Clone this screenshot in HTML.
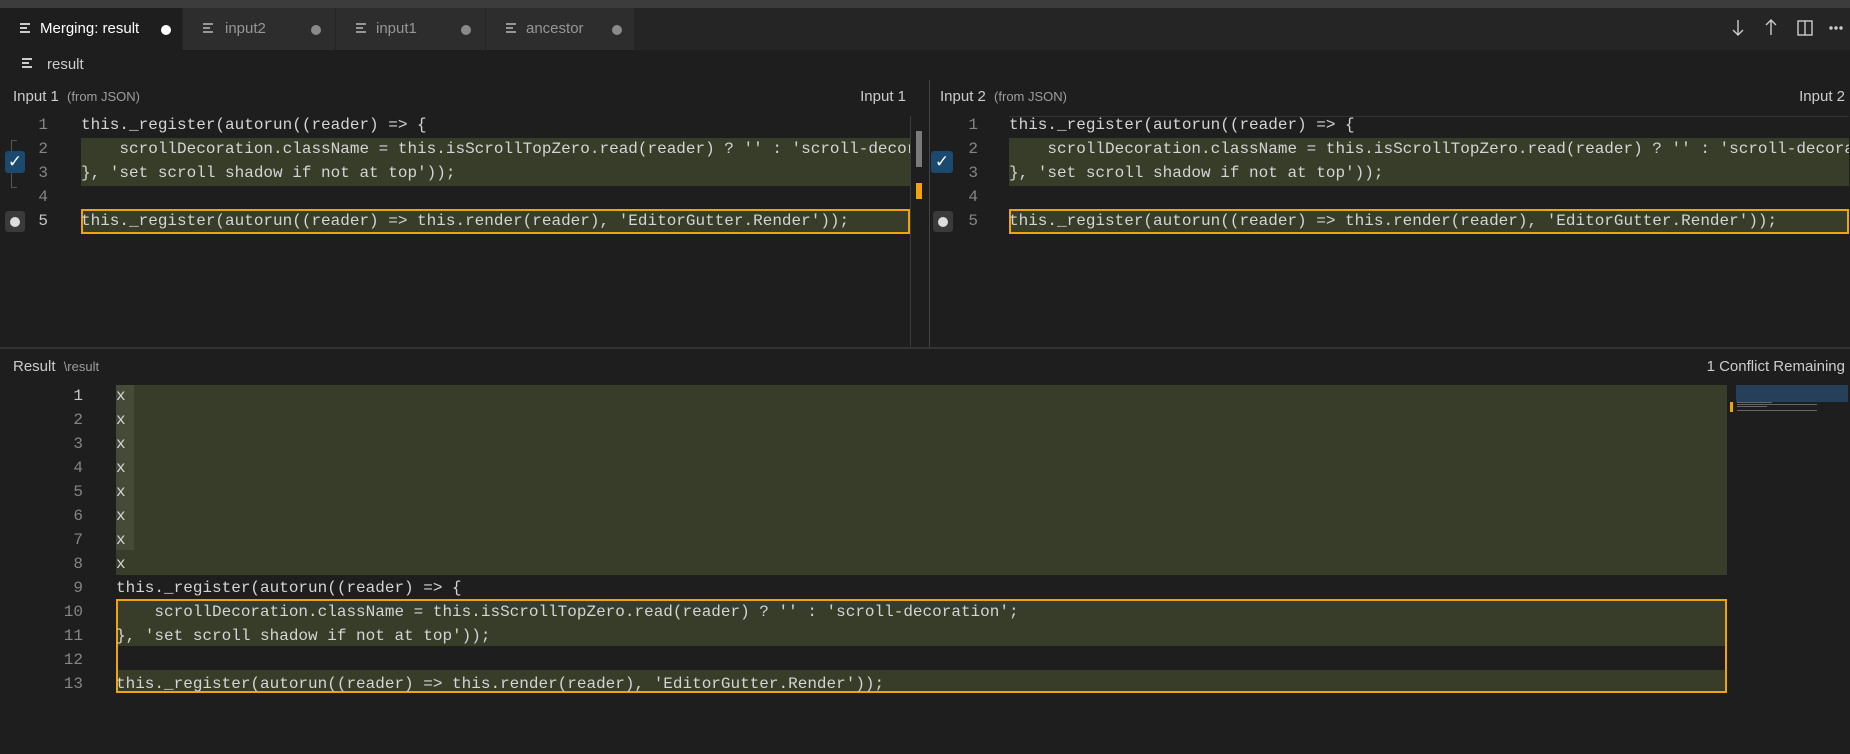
<!DOCTYPE html>
<html><head><meta charset="utf-8"><style>
*{margin:0;padding:0;box-sizing:border-box}
body{width:1850px;height:754px;background:#1e1e1e;overflow:hidden;position:relative;font-family:"Liberation Sans",sans-serif;color:#cccccc}
.a{position:absolute}
.code{font-family:"Liberation Mono",monospace;font-size:16px;color:#d4d4d4;white-space:pre;line-height:24px}
.ln{font-family:"Liberation Mono",monospace;font-size:16px;color:#858585;text-align:right;line-height:24px;width:30px}
.tab{position:absolute;top:8px;height:42px;background:#2d2d2d;font-size:15px;color:#969696;line-height:42px;border-right:1px solid #252526}
.tab .ic{position:absolute;left:20px;top:15px;width:10px}
.ic i{display:block;height:1.5px;background:currentColor;margin-bottom:2.5px}
.dot{position:absolute;top:17px;width:10px;height:10px;border-radius:50%;background:#8a8a8a}
.hl{background:#373d29}
.ob{border:2px solid #f0a30a}
</style></head><body>
<div class="a" style="left:0;top:0;width:1850px;height:8px;background:#3c3c3c"></div>
<div class="a" style="left:0;top:8px;width:1850px;height:42px;background:#252526"></div>
<div class="tab" style="left:0;width:183px;background:#1e1e1e;color:#fff"><span class="ic" style="color:#ccc"><i></i><i style="width:7px"></i><i></i></span><span style="position:absolute;left:40px">Merging: result</span><span class="dot" style="left:161px;background:#fff"></span></div>
<div class="tab" style="left:183px;width:153px"><span class="ic"><i></i><i style="width:7px"></i><i></i></span><span style="position:absolute;left:42px">input2</span><span class="dot" style="left:128px"></span></div>
<div class="tab" style="left:336px;width:150px"><span class="ic"><i></i><i style="width:7px"></i><i></i></span><span style="position:absolute;left:40px">input1</span><span class="dot" style="left:125px"></span></div>
<div class="tab" style="left:486px;width:149px"><span class="ic"><i></i><i style="width:7px"></i><i></i></span><span style="position:absolute;left:40px">ancestor</span><span class="dot" style="left:126px"></span></div>
<svg class="a" style="left:1728px;top:18px" width="120" height="20" viewBox="0 0 120 20" fill="none" stroke="#ccc" stroke-width="1.4">
<path d="M10 2v15M5 12l5 5 5-5"/><path d="M43 17V2M38 7l5-5 5 5"/>
<rect x="70" y="3" width="14" height="14"/><path d="M77 3v14"/>
<circle cx="103" cy="10" r="1" fill="#ccc"/><circle cx="108" cy="10" r="1" fill="#ccc"/><circle cx="113" cy="10" r="1" fill="#ccc"/>
</svg>
<span class="a ic" style="left:22px;top:58px;width:10px;color:#ccc"><i></i><i style="width:7px"></i><i></i></span>
<div class="a" style="left:47px;top:56px;font-size:15px;color:#cccccc">result</div>

<!-- Input 1 -->
<div class="a" style="left:13px;top:88px;font-size:15px;color:#ccc">Input 1 <span style="font-size:13px;color:#9d9d9d;margin-left:4px">(from JSON)</span></div>
<div class="a" style="left:850px;top:88px;width:56px;text-align:right;font-size:15px;color:#ccc">Input 1</div>
<div class="a hl" style="left:81px;top:138px;width:829px;height:48px"></div>
<div class="a ob" style="left:81px;top:209px;width:829px;height:25px;background:#373d29"></div>
<div class="a" style="left:11px;top:140px;width:6px;height:48px;border:1px solid #555;border-right:none"></div>
<div class="a" style="left:5px;top:151px;width:20px;height:22px;background:#1b4a6e;border-radius:3px;color:#fff;font-size:17px;text-align:center;line-height:22px">✓</div>
<div class="a" style="left:5px;top:211px;width:20px;height:21px;background:#3a3a3a;border-radius:3px"><div class="a" style="left:5px;top:6px;width:10px;height:10px;border-radius:50%;background:#ddd"></div></div>
<div class="a" style="left:18px;top:113px">
<div class="ln">1</div><div class="ln">2</div><div class="ln">3</div><div class="ln">4</div><div class="ln" style="color:#c6c6c6">5</div></div>
<div class="a" style="left:81px;top:113px;width:829px;overflow:hidden"><div class="code">this._register(autorun((reader) => {
    scrollDecoration.className = this.isScrollTopZero.read(reader) ? '' : 'scroll-decoration';
}, 'set scroll shadow if not at top'));

this._register(autorun((reader) => this.render(reader), 'EditorGutter.Render'));</div></div>
<div class="a" style="left:910px;top:116px;width:1px;height:232px;background:#3a3a3a"></div>
<div class="a" style="left:916px;top:131px;width:6px;height:36px;background:#7a7a7a"></div>
<div class="a" style="left:916px;top:183px;width:6px;height:16px;background:#f0a30a"></div>
<div class="a" style="left:929px;top:80px;width:1px;height:268px;background:#444"></div>

<!-- Input 2 -->
<div class="a" style="left:940px;top:88px;font-size:15px;color:#ccc">Input 2 <span style="font-size:13px;color:#9d9d9d;margin-left:4px">(from JSON)</span></div>
<div class="a" style="left:1780px;top:88px;width:65px;text-align:right;font-size:15px;color:#ccc">Input 2</div>
<div class="a" style="left:1009px;top:116px;width:840px;height:1px;background:#333"></div>
<div class="a hl" style="left:1009px;top:138px;width:840px;height:48px"></div>
<div class="a ob" style="left:1009px;top:209px;width:840px;height:25px;background:#373d29"></div>
<div class="a" style="left:898px;top:140px;width:6px;height:48px"></div>
<div class="a" style="left:931px;top:151px;width:22px;height:22px;background:#1b4a6e;border-radius:3px;color:#fff;font-size:17px;text-align:center;line-height:22px">✓</div>
<div class="a" style="left:933px;top:211px;width:20px;height:21px;background:#3a3a3a;border-radius:3px"><div class="a" style="left:5px;top:6px;width:10px;height:10px;border-radius:50%;background:#ddd"></div></div>
<div class="a" style="left:948px;top:113px">
<div class="ln">1</div><div class="ln">2</div><div class="ln">3</div><div class="ln">4</div><div class="ln">5</div></div>
<div class="a" style="left:1009px;top:113px;width:840px;overflow:hidden"><div class="code">this._register(autorun((reader) => {
    scrollDecoration.className = this.isScrollTopZero.read(reader) ? '' : 'scroll-decoration';
}, 'set scroll shadow if not at top'));

this._register(autorun((reader) => this.render(reader), 'EditorGutter.Render'));</div></div>

<!-- Result -->
<div class="a" style="left:0;top:347px;width:1850px;height:2px;background:#333"></div>
<div class="a" style="left:13px;top:358px;font-size:15px;color:#ccc">Result <span style="font-size:13px;color:#9d9d9d;margin-left:4px">\result</span></div>
<div class="a" style="left:1600px;top:358px;width:1245px;left:600px;text-align:right;font-size:15px;color:#ccc">1 Conflict Remaining</div>
<div class="a hl" style="left:116px;top:385px;width:1611px;height:190px"></div>
<div class="a" style="left:116px;top:385px;width:18px;height:165px;background:#454b36"></div>
<div class="a ob" style="left:116px;top:599px;width:1611px;height:94px;background:#373d29"></div>
<div class="a" style="left:118px;top:646px;width:1607px;height:24px;background:#1e1e1e"></div>
<div class="a" style="left:53px;top:384px">
<div class="ln" style="color:#c6c6c6">1</div><div class="ln">2</div><div class="ln">3</div><div class="ln">4</div><div class="ln">5</div><div class="ln">6</div><div class="ln">7</div><div class="ln">8</div><div class="ln">9</div><div class="ln">10</div><div class="ln">11</div><div class="ln">12</div><div class="ln">13</div></div>
<div class="a" style="left:116px;top:384px;width:1611px;overflow:hidden"><div class="code">x
x
x
x
x
x
x
x
this._register(autorun((reader) => {
    scrollDecoration.className = this.isScrollTopZero.read(reader) ? '' : 'scroll-decoration';
}, 'set scroll shadow if not at top'));

this._register(autorun((reader) => this.render(reader), 'EditorGutter.Render'));</div></div>
<div class="a" style="left:1736px;top:385px;width:112px;height:17px;background:#264059"></div>
<div class="a" style="left:1730px;top:402px;width:3px;height:10px;background:#f0a30a"></div>
<div class="a" style="left:1737px;top:402px;width:35px;height:1px;background:#666"></div>
<div class="a" style="left:1737px;top:404px;width:80px;height:1px;background:#666"></div>
<div class="a" style="left:1737px;top:406px;width:30px;height:1px;background:#666"></div>
<div class="a" style="left:1737px;top:410px;width:80px;height:1px;background:#666"></div>
</body></html>
